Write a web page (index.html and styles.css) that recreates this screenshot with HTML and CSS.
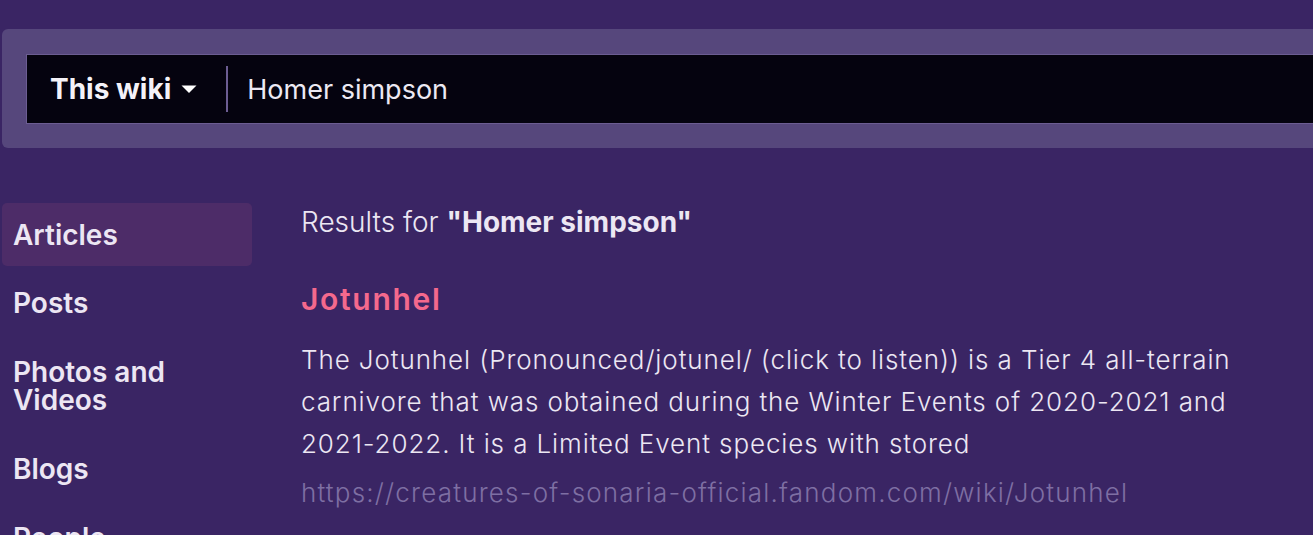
FILE: index.html
```html
<!DOCTYPE html>
<html lang="en">
<head>
<meta charset="utf-8">
<title>Search results</title>
<link rel="stylesheet" href="styles.css">
</head>
<body>
<div class="search-panel">
  <div class="search-box">
    <div class="scope">This wiki
      <svg class="caret" width="16" height="9" viewBox="0 0 16 9"><path d="M0.5 0.5h15L8 8z" fill="#ffffff"/></svg>
    </div>
    <div class="sep"></div>
    <div class="query">Homer simpson</div>
  </div>
</div>
<div class="main">
  <nav class="sidebar">
    <div class="tab active">Articles</div>
    <div class="tab">Posts</div>
    <div class="tab">Photos and Videos</div>
    <div class="tab">Blogs</div>
    <div class="tab">People</div>
  </nav>
  <section class="results">
    <p class="results-for">Results for <b>"Homer simpson"</b></p>
    <article class="result">
      <h2 class="result-title">Jotunhel</h2>
      <p class="snippet">The Jotunhel (Pronounced/jotunel/ (click to listen)) is a Tier 4 all-terrain carnivore that was obtained during the Winter Events of 2020-2021 and <span class="nw">2021-2022.</span> It is a Limited Event species with stored</p>
      <p class="url">https://creatures-of-sonaria-official.fandom.com/wiki/Jotunhel</p>
    </article>
  </section>
</div>
</body>
</html>
```
FILE: styles.css
```css
html, body {
  margin: 0;
  padding: 0;
  background: #3a2564;
  height: 100%;
  overflow: hidden;
}
body {
  font-family: "Inter", "Noto Sans", sans-serif;
  color: #ece7f3;
}
.search-panel {
  margin: 29px 0 0 2px;
  height: 70px;
  padding: 25px 0 24px 24px;
  background: #56477c;
  border-radius: 6px 0 0 6px;
}
.search-box {
  height: 68px;
  background: #05030f;
  border: 1px solid #6c5d92;
  border-right: none;
  display: flex;
  align-items: center;
}
.scope {
  display: flex;
  align-items: center;
  padding-left: 23px;
  font-weight: 700;
  font-size: 28px;
  color: #f4f2f8;
}
.caret {
  margin-left: 10px;
}
.sep {
  width: 2px;
  height: 46px;
  background: #6c5d92;
  margin-left: 29px;
}
.query {
  margin-left: 19px;
  font-size: 27px;
  color: #ece9f3;
}
.main {
  display: flex;
  margin-top: 55px;
}
.sidebar {
  width: 250px;
  margin-left: 2px;
  display: flex;
  flex-direction: column;
  gap: 6px;
  flex-shrink: 0;
}
.tab {
  padding: 17px 11px 18px;
  font-size: 28px;
  line-height: 28px;
  font-weight: 600;
  border-radius: 5px;
  color: #ece6f3;
}
.tab.active {
  padding: 18px 11px 17px;
  background: #4d2c68;
}
.results {
  margin-left: 49px;
  padding-top: 4px;
}
.results-for {
  margin: 0;
  font-size: 28px;
  line-height: 30px;
  font-weight: 300;
}
.results-for b {
  font-weight: 700;
}
.result-title {
  margin: 45px 0 0;
  font-size: 30px;
  line-height: 34px;
  font-weight: 600;
  letter-spacing: 1.7px;
  color: #f4698d;
}
.snippet {
  margin: 23px 0 0;
  font-size: 26px;
  line-height: 42px;
  font-weight: 300;
  letter-spacing: 0.9px;
  max-width: 950px;
}
.nw {
  white-space: nowrap;
}
.url {
  margin: 11px 0 0;
  font-size: 26px;
  line-height: 34px;
  font-weight: 300;
  letter-spacing: 1.2px;
  color: #7e6fa3;
}
```
